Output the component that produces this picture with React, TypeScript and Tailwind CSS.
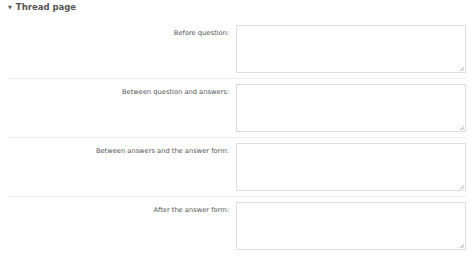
const rows = [
  "Before question:",
  "Between question and answers:",
  "Between answers and the answer form:",
  "After the answer form:",
];

function Grip() {
  return (
    <svg
      className="pointer-events-none absolute bottom-[2px] right-[2px]"
      width="5"
      height="5"
      viewBox="0 0 5 5"
    >
      <path d="M5 1 L1 5 M5 3 L3 5" stroke="#aaaaaa" strokeWidth="0.8" />
    </svg>
  );
}

export default function App() {
  return (
    <div
      className="w-[474px] h-[256px] overflow-hidden bg-white px-[8px]"
      style={{ fontFamily: '"DejaVu Sans", Verdana, sans-serif' }}
    >
      <div className="flex h-[20px] items-center gap-[4px] pb-[6px] pt-[1px] text-[#555]">
        <span className="text-[5px] leading-none">▼</span>
        <h2 className="text-[8.5px] font-bold leading-none">Thread page</h2>
      </div>
      {rows.map((label, i) => (
        <div
          key={label}
          className={
            i === 0
              ? "flex gap-[7px] pt-[5px] pb-[5px]"
              : "flex gap-[7px] border-t border-[#eeeeee] pt-[5px] pb-[5px]"
          }
        >
          <label className="flex-1 pt-[3px] text-right text-[6.7px] leading-[10px] text-[#555]">
            {label}
          </label>
          <div className="relative h-[48px] w-[230px]">
            <textarea className="block h-full w-full resize-none border border-[#dddddd] bg-white" />
            <Grip />
          </div>
        </div>
      ))}
    </div>
  );
}
